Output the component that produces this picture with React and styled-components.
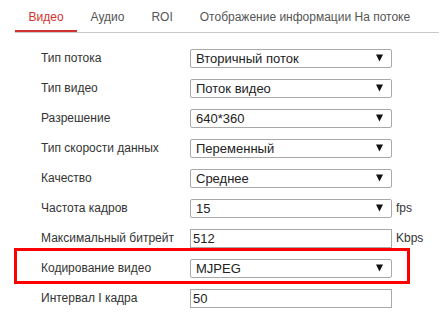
import React from 'react';
import styled, { createGlobalStyle } from 'styled-components';

const GlobalStyle = createGlobalStyle`
  html, body {
    margin: 0;
    padding: 0;
    background: #fff;
  }
  body {
    font-family: 'Liberation Sans', Arial, sans-serif;
    font-size: 12px;
    color: #333;
  }
`;

const tabs = ['Видео', 'Аудио', 'ROI', 'Отображение информации На потоке'];

const rows = [
  { label: 'Тип потока', kind: 'select', value: 'Вторичный поток' },
  { label: 'Тип видео', kind: 'select', value: 'Поток видео' },
  { label: 'Разрешение', kind: 'select', value: '640*360' },
  { label: 'Тип скорости данных', kind: 'select', value: 'Переменный' },
  { label: 'Качество', kind: 'select', value: 'Среднее' },
  { label: 'Частота кадров', kind: 'select', value: '15', unit: 'fps' },
  { label: 'Максимальный битрейт', kind: 'input', value: '512', unit: 'Kbps' },
  { label: 'Кодирование видео', kind: 'select', value: 'MJPEG', highlight: true },
  { label: 'Интервал I кадра', kind: 'input', value: '50' },
];

const App = () => (
  <Page>
    <GlobalStyle />
    <TabBar>
      {tabs.map((t, i) => (
        <Tab key={t} $active={i === 0}>
          {t}
        </Tab>
      ))}
    </TabBar>
    <Form>
      {rows.map((r) => (
        <Row key={r.label} $highlight={r.highlight}>
          <Label>{r.label}</Label>
          {r.kind === 'select' ? (
            <SelectBox>
              <span>{r.value}</span>
              <Arrow viewBox="0 0 7 8">
                <path d="M0 0.5H7L3.5 7.5Z" fill="#111" />
              </Arrow>
            </SelectBox>
          ) : (
            <InputBox>{r.value}</InputBox>
          )}
          {r.unit && <Unit>{r.unit}</Unit>}
        </Row>
      ))}
    </Form>
  </Page>
);

export default App;

const Page = styled.div`
  width: 440px;
  height: 324px;
  overflow: hidden;
`;

const TabBar = styled.div`
  display: flex;
  margin-left: 15px;
  width: 424px;
  border-bottom: 1px solid #c8c8c8;
`;

const Tab = styled.div`
  padding: 4px 13.5px 0;
  height: 26px;
  line-height: 26px;
  font-size: 12px;
  color: ${(p) => (p.$active ? '#d2322d' : '#555')};
  border-bottom: 2px solid ${(p) => (p.$active ? '#d2322d' : 'transparent')};
  white-space: nowrap;
`;

const Form = styled.div`
  padding: 10px 0 0 41px;
`;

const Row = styled.div`
  position: relative;
  display: flex;
  align-items: center;
  height: 30px;

  ${(p) =>
    p.$highlight &&
    `
    &::after {
      content: '';
      position: absolute;
      left: -27px;
      top: -5px;
      width: 396px;
      height: 36px;
      box-sizing: border-box;
      border: 3px solid #ff0000;
      pointer-events: none;
    }
  `}
`;

const Label = styled.div`
  width: 149px;
  color: #333;
  white-space: nowrap;
`;

const SelectBox = styled.div`
  box-sizing: border-box;
  display: flex;
  align-items: center;
  justify-content: space-between;
  width: 202px;
  height: 19px;
  padding: 0 8px 0 5px;
  border: 1px solid #a9a9a9;
  border-radius: 2px;
  color: #222;
  font-size: 13px;
`;

const Arrow = styled.svg`
  width: 7px;
  height: 8px;
`;

const InputBox = styled.div`
  box-sizing: border-box;
  width: 202px;
  height: 19px;
  line-height: 17px;
  padding: 0 2px;
  border: 1px solid #a9a9a9;
  color: #222;
  font-size: 13px;
`;

const Unit = styled.div`
  margin-left: 4px;
  color: #333;
`;
